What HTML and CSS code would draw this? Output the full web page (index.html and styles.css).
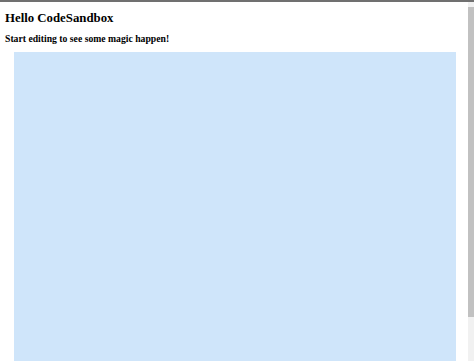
FILE: index.html
```html
<!DOCTYPE html>
<html>
<head>
<meta charset="utf-8">
<link rel="stylesheet" href="styles.css">
</head>
<body>
<div class="frame">
  <div class="page">
    <h1 class="title">Hello CodeSandbox</h1>
    <h2 class="subtitle">Start editing to see some magic happen!</h2>
    <div class="canvas"></div>
  </div>
  <div class="scrollbar"><div class="thumb"></div></div>
</div>
</body>
</html>
```
FILE: styles.css
```css
html, body {
  margin: 0;
  padding: 0;
  background: #ffffff;
  overflow: hidden;
}
.frame {
  display: flex;
  height: 359px;
  border-top: 2px solid #707070;
}
.page {
  flex: 1;
  display: flex;
  flex-direction: column;
  padding: 0 12px 0 5px;
  font-family: "Liberation Serif", "Times New Roman", serif;
  color: #000;
}
.title {
  font-size: 12.8px;
  font-weight: bold;
  line-height: 14px;
  margin: 9px 0 0 0;
}
.subtitle {
  font-size: 9.7px;
  font-weight: bold;
  line-height: 12px;
  margin: 8px 0 0 0;
}
.canvas {
  flex: 1;
  margin: 7px 0 0 9px;
  background: #cfe5fa;
}
.scrollbar {
  width: 6px;
  background: #f1f1f1;
  display: flex;
  flex-direction: column;
}
.thumb {
  margin-top: 5px;
  height: 310px;
  background: #c1c1c1;
}
```
